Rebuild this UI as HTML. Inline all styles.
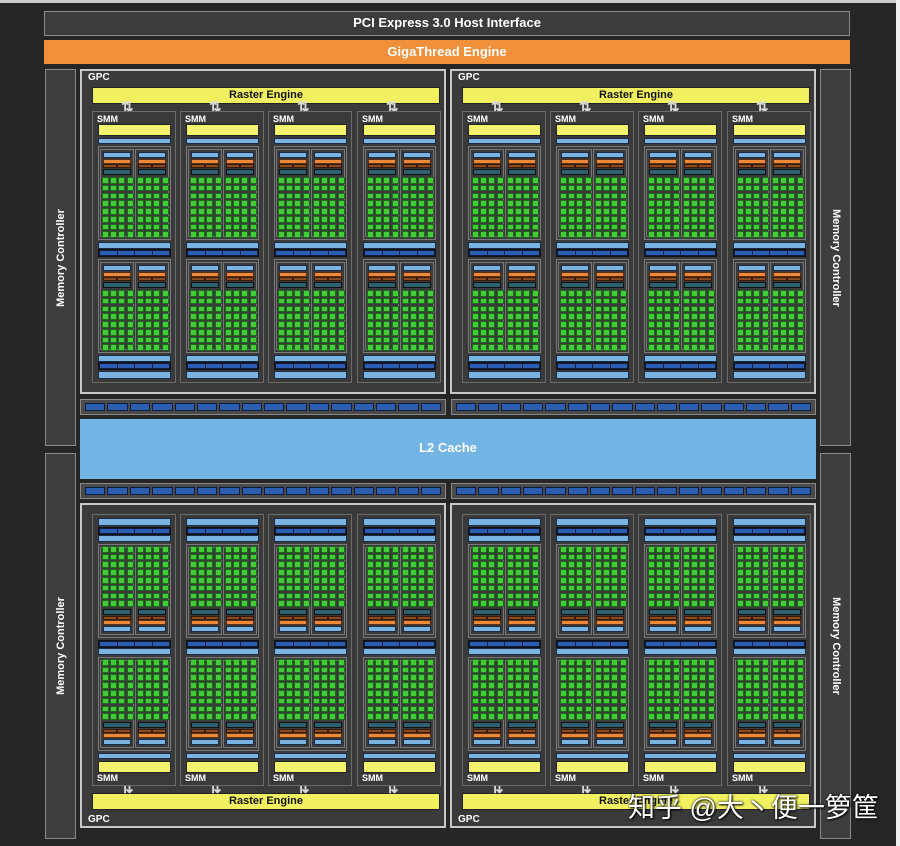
<!DOCTYPE html>
<html><head><meta charset="utf-8">
<style>
*{margin:0;padding:0;box-sizing:border-box}
body{width:900px;height:846px;background:#262626;position:relative;overflow:hidden;font-family:"Liberation Sans",Arial,sans-serif}
.a{position:absolute}
.bar{position:absolute;color:#fff;font-weight:bold;font-size:13px;text-align:center}
.mc{position:absolute;background:#3e3e3e;border:1px solid #8a8a8a;width:31px}
.mc span{position:absolute;left:50%;top:50%;color:#fff;font-weight:bold;font-size:11px;white-space:nowrap}
.gpc{position:absolute;width:366px;height:325px;border:2px solid #c8c8c8;background:#3a3a3a}
.lab{position:absolute;color:#fff;font-weight:bold}
.smm{position:absolute;width:84px;height:272px;border:1px solid #6c6c6c;background:#3a3a3a;top:40px}
.y{position:absolute;background:#f3f36e;border:1px solid #222}
.lb{position:absolute;background:#79b3e0;border:1px solid #1d2a44}
.br{position:absolute;display:flex;gap:1px;background:#0f1c3a;padding:1px;border:1px solid #111}
.br i{flex:1;background:#2b5eb0}
.blk{position:absolute;left:5px;width:73px;height:94px;border:1px solid #7a7a7a}
.col{position:absolute;top:2px;width:34px;height:88px;border:1px solid #777}
.or{position:absolute;background:#ec8a3c;border:1px solid #5a2c10}
.bw{position:absolute;background:#8a4a22;border:1px solid #3a1a08}
.tl{position:absolute;background:#2d6070;border:1px solid #111}
.gr{position:absolute;display:grid;grid-template-columns:repeat(4,7px);grid-auto-rows:6.6px;gap:1.2px}
.gr i{background:#44cc38;border:0.6px solid #1f6a1c}
.xb{position:absolute;height:16px;background:#4a4a4a;border:1px solid #8a8a8a;display:flex;gap:2px;padding:3px 4px}
.xb i{flex:1;background:#2b5eb0;border:1px solid #0f1c3a}
.arr{position:absolute;color:#d8d8d8;font-size:15px;line-height:10px;font-weight:bold;letter-spacing:-3px}
</style></head><body>
<div class="a" style="left:0;top:0;width:900px;height:3px;background:#ccc"></div>
<div class="a" style="left:896px;top:0;width:4px;height:846px;background:#eee"></div>
<div class="bar" style="left:44px;top:11px;width:806px;height:25px;background:#3c3c3c;border:1px solid #8a8a8a;line-height:22px">PCI Express 3.0 Host Interface</div>
<div class="bar" style="left:44px;top:40px;width:806px;height:24px;background:#f0903a;line-height:24px">GigaThread Engine</div>
<div class="mc" style="left:45px;top:69px;height:377px"><span style="transform:translate(-50%,-50%) rotate(-90deg)">Memory Controller</span></div>
<div class="mc" style="left:45px;top:453px;height:386px"><span style="transform:translate(-50%,-50%) rotate(-90deg)">Memory Controller</span></div>
<div class="mc" style="left:820px;top:69px;height:377px"><span style="transform:translate(-50%,-50%) rotate(90deg)">Memory Controller</span></div>
<div class="mc" style="left:820px;top:453px;height:386px"><span style="transform:translate(-50%,-50%) rotate(90deg)">Memory Controller</span></div>
<div class="bar" style="left:80px;top:419px;width:736px;height:60px;background:#72b4e4;line-height:58px;font-size:13px">L2 Cache</div>
<div id="root"></div>
<div class="a" style="left:628px;top:786px;color:#fff;font-size:27px;font-family:'Liberation Sans','Noto Sans CJK SC',sans-serif;text-shadow:0 0 2px #000,1px 1px 2px #000;white-space:nowrap">知乎 @大丶便一箩筐</div>
<script>
var R=document.getElementById('root');
function col(x){var h='<div class="col" style="left:'+x+'px"><div class="lb" style="left:2px;top:2px;width:28px;height:6px"></div><div class="or" style="left:2px;top:9px;width:28px;height:5px"></div><div class="bw" style="left:2px;top:14px;width:14px;height:4px"></div><div class="bw" style="left:16px;top:14px;width:14px;height:4px"></div><div class="tl" style="left:2px;top:19px;width:28px;height:6px"></div><div class="gr" style="left:1px;top:27px">';
for(var i=0;i<32;i++)h+='<i></i>';return h+'</div></div>';}
function blk(t){return '<div class="blk" style="top:'+t+'px">'+col(1)+col(36)+'</div>';}
function br(t){return '<div class="br" style="left:5px;top:'+t+'px;width:73px;height:8px"><i></i><i></i><i></i><i></i></div>';}
function smm(x,flip){var s=flip?'transform:scaleY(-1);':'';
return '<div class="smm" style="left:'+x+'px"><div class="lab" style="left:4px;top:2px;font-size:9px;'+s+'">SMM</div><div class="y" style="left:5px;top:12px;width:73px;height:12px"></div><div class="lb" style="left:5px;top:26px;width:73px;height:6px"></div>'+blk(34)+'<div class="lb" style="left:5px;top:130px;width:73px;height:7px"></div>'+br(137)+blk(147)+'<div class="lb" style="left:5px;top:243px;width:73px;height:7px"></div>'+br(250)+'<div class="lb" style="left:5px;top:259px;width:73px;height:8px"></div></div>';}
function gpc(x,y,flip){var s=flip?'transform:scaleY(-1);':'';
var h='<div class="gpc" style="left:'+x+'px;top:'+y+'px;'+s+'"><div class="lab" style="left:6px;top:1px;font-size:10px;'+s+'">GPC</div><div class="y" style="left:10px;top:16px;width:348px;height:17px;background:#f0f060"></div><div class="lab" style="left:10px;top:16px;width:348px;height:17px;line-height:16px;text-align:center;color:#111;font-size:11px;'+s+'">Raster Engine</div>';
[0,88,176,265].forEach(function(o){h+='<div class="arr" style="left:'+(o+39)+'px;top:32px;'+s+'">⇅</div>';h+=smm(o+10,flip);});
return h+'</div>';}
function xb(x,y){var h='<div class="xb" style="left:'+x+'px;top:'+y+'px;width:'+(x>440?365:366)+'px">';for(var i=0;i<16;i++)h+='<i></i>';return h+'</div>';}
R.innerHTML=gpc(80,69,0)+gpc(450,69,0)+gpc(80,503,1)+gpc(450,503,1)+xb(80,399)+xb(451,399)+xb(80,483)+xb(451,483);
</script>
</body></html>
